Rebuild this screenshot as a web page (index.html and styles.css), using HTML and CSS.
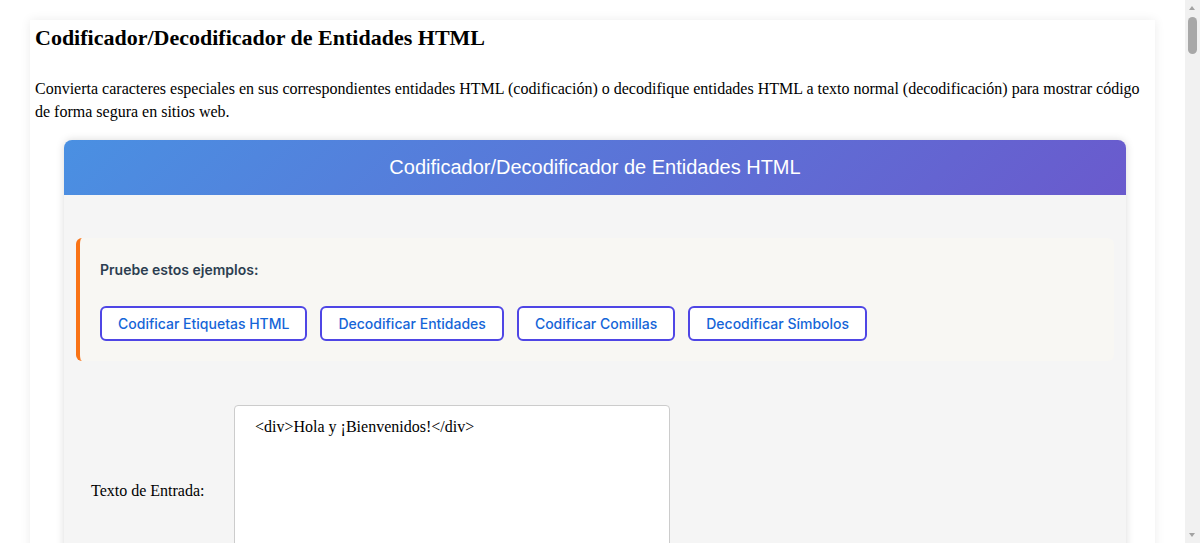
FILE: index.html
```
<!DOCTYPE html>
<html lang="es">
<head>
    <meta charset="UTF-8">
    <meta name="viewport" content="width=device-width, initial-scale=1.0">
    <title>Codificador/Decodificador de Entidades HTML</title>
    <link rel="stylesheet" href="styles.css">
</head>
<body>
    <div class="page">
        <h2 class="page-title">Codificador/Decodificador de Entidades HTML</h2>
        <p class="intro">Convierta caracteres especiales en sus correspondientes entidades HTML (codificación) o decodifique entidades HTML a texto normal (decodificación) para mostrar código de forma segura en sitios web.</p>

        <div class="tool">
            <div class="tool-header">Codificador/Decodificador de Entidades HTML</div>
            <div class="tool-body">
                <div class="examples">
                    <div class="examples-title">Pruebe estos ejemplos:</div>
                    <div class="examples-list">
                        <button class="example-btn">Codificar Etiquetas HTML</button>
                        <button class="example-btn">Decodificar Entidades</button>
                        <button class="example-btn">Codificar Comillas</button>
                        <button class="example-btn">Decodificar Símbolos</button>
                    </div>
                </div>

                <div class="form-row">
                    <label for="input" class="form-label">Texto de Entrada:</label>
                    <textarea id="input" class="form-input">&lt;div&gt;Hola y ¡Bienvenidos!&lt;/div&gt;</textarea>
                </div>

                <div class="form-row">
                    <label class="form-label">Modo:</label>
                    <div class="modes">
                        <label><input type="radio" name="mode" checked> Codificar</label>
                        <label><input type="radio" name="mode"> Decodificar</label>
                    </div>
                </div>
            </div>
        </div>
    </div>

    <!-- barra de desplazamiento del navegador -->
    <div class="scrollbar">
        <span class="scroll-arrow up"></span>
        <span class="scroll-thumb"></span>
        <span class="scroll-arrow down"></span>
    </div>
</body>
</html>
```

FILE: styles.css
```
body {
    margin: 0 15px 0 0;
    background-color: #fff;
    font-family: "Liberation Serif", "Times New Roman", serif;
    color: #000;
}

.page {
    margin: 20px 30px;
    padding: 5px 5px 40px;
    background-color: #fff;
    box-shadow: 0 0 10px rgba(0, 0, 0, 0.08);
}

.page-title {
    font-size: 22px;
    margin: 0 0 26px;
    line-height: 26px;
}

.intro {
    font-size: 16px;
    line-height: 23px;
    margin: 0 0 17px;
}

.tool {
    margin: 0 24px 0 29px;
    background-color: #f5f5f5;
    border-radius: 8px;
    box-shadow: 0 0 8px rgba(0, 0, 0, 0.15);
    overflow: hidden;
}

.tool-header {
    height: 55px;
    line-height: 54px;
    text-align: center;
    color: #fff;
    font-family: "Liberation Sans", Arial, sans-serif;
    font-size: 20px;
    background: linear-gradient(135deg, #4a90e2, #6a5acd);
}

.tool-body {
    padding: 43px 12px 40px;
}

.examples {
    background-color: #f8f7f3;
    border-left: 4px solid #f97316;
    border-radius: 6px;
    padding: 23px 20px 20px;
}

.examples-title {
    font-family: Inter, "Noto Sans", sans-serif;
    font-size: 14px;
    font-weight: 600;
    color: #2c3e50;
    margin-bottom: 28px;
}

.examples-list {
    display: flex;
    gap: 13px;
}

.example-btn {
    font-family: Inter, "Noto Sans", sans-serif;
    font-size: 14px;
    font-weight: 500;
    color: #1565d8;
    background-color: #fff;
    border: 2px solid #4f46e5;
    border-radius: 6px;
    height: 35px;
    padding: 0 16px;
    cursor: pointer;
}

.form-row {
    display: flex;
    align-items: center;
    margin-top: 44px;
}

.form-label {
    width: 143px;
    padding-left: 15px;
    font-size: 16px;
}

.form-input {
    width: 436px;
    height: 172px;
    box-sizing: border-box;
    padding: 12px 20px;
    border: 1px solid #ccc;
    border-radius: 4px;
    font-family: "Liberation Serif", "Times New Roman", serif;
    font-size: 16px;
    resize: vertical;
}

.modes {
    display: flex;
    gap: 20px;
    font-size: 16px;
}

.scrollbar {
    position: fixed;
    top: 0;
    right: 0;
    bottom: 0;
    width: 15px;
    background-color: #f1f1f1;
}

.scroll-thumb {
    position: absolute;
    top: 17px;
    left: 3px;
    width: 9px;
    height: 37px;
    border-radius: 5px;
    background-color: #a8a8a8;
}

.scroll-arrow {
    position: absolute;
    left: 4px;
    width: 0;
    height: 0;
    border-left: 3.5px solid transparent;
    border-right: 3.5px solid transparent;
}

.scroll-arrow.up {
    top: 6px;
    border-bottom: 4px solid #a3a3a3;
}

.scroll-arrow.down {
    bottom: 6px;
    border-top: 4px solid #a3a3a3;
}
```
